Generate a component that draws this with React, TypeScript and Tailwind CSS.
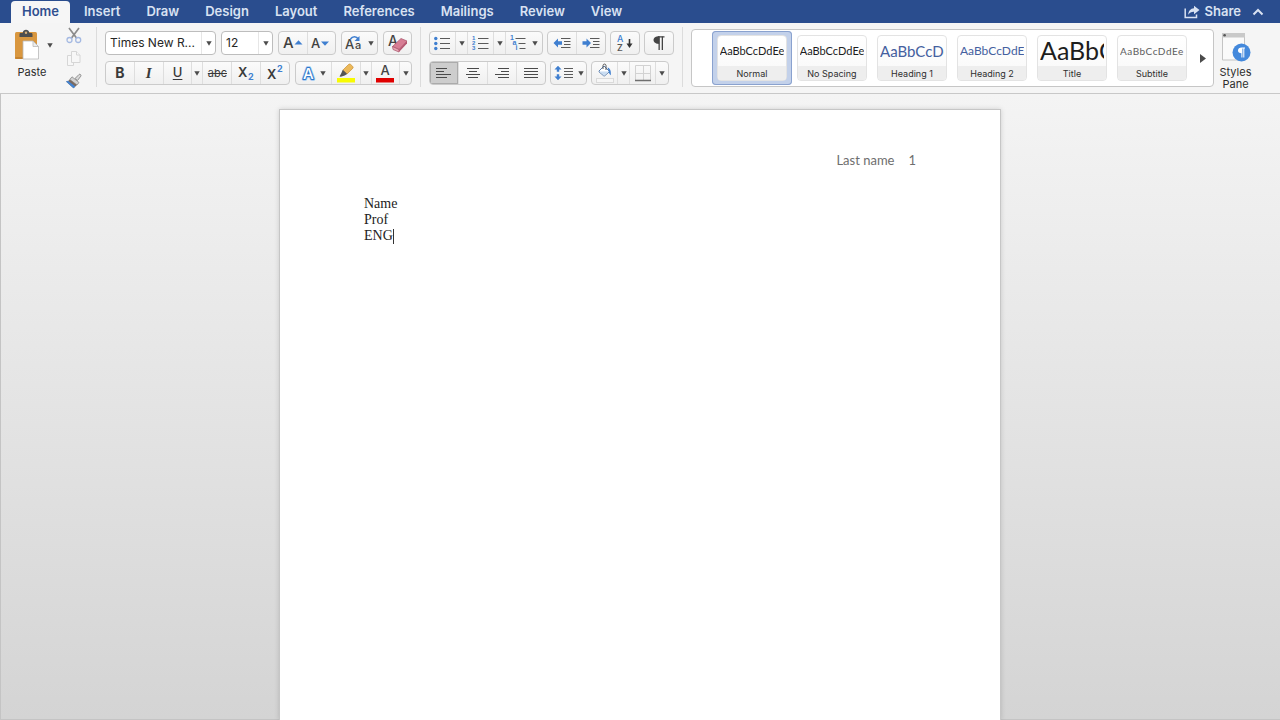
import React from "react";

type Children = { children?: React.ReactNode };

const tabs = ["Home", "Insert", "Draw", "Design", "Layout", "References", "Mailings", "Review", "View"];

const styleCards = [
  { name: "Normal", sample: "AaBbCcDdEe", look: "text-[11px] text-[#1d1d1d] justify-center" },
  { name: "No Spacing", sample: "AaBbCcDdEe", look: "text-[11px] text-[#1d1d1d] justify-center" },
  { name: "Heading 1", sample: "AaBbCcDc", look: "text-[15px] text-[#44609f] justify-start" },
  { name: "Heading 2", sample: "AaBbCcDdEe", look: "text-xs text-[#44609f] justify-start" },
  { name: "Title", sample: "AaBbC", look: "text-[25px] text-[#1d1d1d] justify-start" },
  { name: "Subtitle", sample: "AaBbCcDdEe", look: "text-[10px] tracking-wider text-[#5c5c5c] justify-start" },
];

function Caret() {
  return (
    <svg width="6" height="5" viewBox="0 0 6 5" className="shrink-0">
      <path d="M0.3 0.3h5.4L3 4.8z" fill="#4b4b4b" />
    </svg>
  );
}

function Group({ children, width }: Children & { width: string }) {
  return (
    <div
      className={`flex h-6 shrink-0 divide-x divide-[#dedede] overflow-hidden rounded border border-[#cbcbcb] bg-gradient-to-b from-[#fbfbfb] to-[#f0f0f0] ${width}`}
    >
      {children}
    </div>
  );
}

function Tool({
  label,
  children,
  width = "flex-1",
  active = false,
}: Children & { label: string; width?: string; active?: boolean }) {
  return (
    <button
      type="button"
      aria-label={label}
      title={label}
      className={`flex items-center justify-center gap-1 ${width} ${active ? "bg-[#cdcdcd] shadow-[inset_0_0_0_1px_#ababab]" : ""}`}
    >
      {children}
    </button>
  );
}

function Pick({ label, value, width }: { label: string; value: string; width: string }) {
  return (
    <label className={`relative flex h-6 shrink-0 items-center rounded border border-[#bdbdbd] bg-white ${width}`}>
      <select aria-label={label} className="h-full w-full appearance-none bg-transparent pl-1 pr-4 text-xs text-[#262626] outline-none">
        <option>{value}</option>
      </select>
      <span className="pointer-events-none absolute inset-y-0 right-0 flex w-[14px] items-center justify-center border-l border-[#e6e6e6]">
        <Caret />
      </span>
    </label>
  );
}

function Lines({ rows }: { rows: [number, number][] }) {
  return (
    <svg width="18" height="16" viewBox="0 0 18 16" stroke="#4a4a4a" strokeWidth="1">
      {rows.map(([from, to], i) => (
        <path key={i} d={`M${from} ${3.5 + i * 3}H${to}`} />
      ))}
    </svg>
  );
}

function Separator() {
  return <div className="mx-2 mb-1.5 mt-1 w-px shrink-0 bg-[#dcdcdc]" />;
}

function ClipboardIcon() {
  return (
    <svg width="26" height="32" viewBox="0 0 26 32">
      <rect x="1" y="3" width="22" height="27" rx="1.5" fill="#d9973f" />
      <rect x="1" y="28" width="22" height="2" rx="1" fill="#c5832f" />
      <path d="M5.500 8V5.200c0-.8.6-1.200 1.400-1.200h1.700C9 2 10.300.8 12 .8S15 2 15.400 4h1.700c.8 0 1.400.4 1.400 1.200V8z" fill="#4f4f4f" />
      <circle cx="12" cy="3.800" r="1.200" fill="#d9b27c" />
      <path d="M9 12h10l5.500 5.500V30H9z" fill="#fff" stroke="#b9b9b9" strokeWidth=".8" />
      <path d="M19 12v5.500h5.500z" fill="#ededed" stroke="#b9b9b9" strokeWidth=".8" />
    </svg>
  );
}

function ScissorsIcon() {
  return (
    <svg width="16" height="17" viewBox="0 0 16 17" fill="none">
      <path d="M3 1l7.500 10M13 1L5.500 11" stroke="#8b8b8b" strokeWidth="1.700" />
      <circle cx="3.500" cy="13" r="2.500" stroke="#a4b9e2" strokeWidth="1.300" />
      <circle cx="12.200" cy="13" r="2.500" stroke="#a4b9e2" strokeWidth="1.300" />
    </svg>
  );
}

function CopyIcon() {
  return (
    <svg width="16" height="17" viewBox="0 0 16 17" fill="#f7f7f7" stroke="#d6d6d6">
      <path d="M1.500 5.500h6v10h-6z" />
      <path d="M5.500 1.500h5l3.500 3.500v7.500H5.500z" />
      <path d="M10.500 1.500V5H14" />
    </svg>
  );
}

function BrushIcon() {
  return (
    <svg width="18" height="16" viewBox="0 0 18 16">
      <path d="M10 5.500l4-4c1-.9 2.600.5 1.800 1.700L12.500 7.500z" fill="#d9d9d9" stroke="#888" strokeWidth=".9" />
      <path d="M7 3.800l7 5.700-2 2.500-7.200-5.500z" fill="#d2d2d2" stroke="#888" strokeWidth=".8" />
      <path d="M4.800 6.500L12 12l-3.500 3.200L1 8.500c1.500 0 2.800-.8 3.800-2z" fill="#7b6a60" />
      <path d="M1 8.500l7.500 6.700 1.900-1.700L3 7.800z" fill="#4384d2" />
    </svg>
  );
}

function GrowFontIcon({ up }: { up: boolean }) {
  return (
    <svg width="22" height="18" viewBox="0 0 22 18">
      <text x="1" y="14" fontFamily="Inter, sans-serif" fontSize={up ? 15 : 13} fontWeight="500" fill="#404040">A</text>
      {up ? <path d="M12.500 10.500L16.500 6.200l4 4.300z" fill="#3f7fd0" /> : <path d="M11 7.500h8l-4 4.300z" fill="#3f7fd0" />}
    </svg>
  );
}

function ChangeCaseIcon() {
  return (
    <svg width="19" height="18" viewBox="0 0 19 18">
      <text x="0" y="15" fontFamily="Inter, sans-serif" fontSize="13" fontWeight="500" fill="#444">A</text>
      <text x="10" y="15" fontFamily="Inter, sans-serif" fontSize="11" fontWeight="500" fill="#444">a</text>
      <path d="M5.500 5c2-3 6-3 7.700 0" fill="none" stroke="#3f7fd0" strokeWidth="1.600" />
      <path d="M14.500 2v5h-5z" fill="#3f7fd0" />
    </svg>
  );
}

function ClearFormatIcon() {
  return (
    <svg width="22" height="20" viewBox="0 0 22 20">
      <text x="1" y="13" fontFamily="Inter, sans-serif" fontSize="14" fontWeight="500" fill="#444">A</text>
      <path d="M5.500 13.500l8.500-8 6 2.500-8 8.500z" fill="#d77d94" stroke="#a65067" strokeWidth=".7" />
      <path d="M5.500 13.500l6.500 3v2.500l-6-2.500z" fill="#e8a6b5" stroke="#a65067" strokeWidth=".7" />
      <path d="M12 16.500L20 8v2.500L12 19z" fill="#b65570" />
    </svg>
  );
}

function TextEffectIcon() {
  return (
    <svg width="15" height="16" viewBox="0 0 15 16">
      <text x="2" y="13.500" fontFamily="Inter, sans-serif" fontSize="15" fontWeight="500" fill="#fff" stroke="#9cc6f2" strokeWidth="3.400" strokeLinejoin="round">A</text>
      <text x="2" y="13.500" fontFamily="Inter, sans-serif" fontSize="15" fontWeight="500" fill="#fff" stroke="#2f77c8" strokeWidth="2" strokeLinejoin="round">A</text>
      <text x="2" y="13.500" fontFamily="Inter, sans-serif" fontSize="15" fontWeight="500" fill="#fff">A</text>
    </svg>
  );
}

function HighlightIcon() {
  return (
    <svg width="20" height="20" viewBox="0 0 20 20">
      <rect x="1" y="15" width="18" height="4.500" fill="#f8fb02" />
      <path d="M7 7L12.500 1.500c.6-.6 1.500-.6 2.200 0l2 1.900c.6.6.6 1.400 0 2L11 11z" fill="#ecb95a" stroke="#c98f35" strokeWidth=".7" />
      <path d="M6.700 6.700l4.500 4.300-2.500 1.600-3.800 1.200-1.400-.4L5.400 10z" fill="#555" />
    </svg>
  );
}

function FontColorIcon() {
  return (
    <svg width="20" height="20" viewBox="0 0 20 20">
      <text x="10" y="12" textAnchor="middle" fontFamily="Inter, sans-serif" fontSize="13" fontWeight="500" fill="#444">A</text>
      <rect x="1" y="15" width="18" height="4.500" fill="#e00000" />
    </svg>
  );
}

function ScriptIcon({ sup }: { sup: boolean }) {
  return (
    <svg width="18" height="20" viewBox="0 0 18 20" fontFamily="Inter, sans-serif">
      <text x="1" y={sup ? 16 : 14} fontSize="13" fontWeight="600" fill="#3a3a3a">X</text>
      <text x="11" y={sup ? 9 : 17} fontSize="9" fontWeight="700" fill="#3f7fd0">2</text>
    </svg>
  );
}

function BulletsIcon() {
  return (
    <svg width="18" height="16" viewBox="0 0 18 16">
      <g fill="#3f7fd0">
        <circle cx="1.800" cy="3.500" r="1.700" />
        <circle cx="1.800" cy="8.500" r="1.700" />
        <circle cx="1.800" cy="13.500" r="1.700" />
      </g>
      <path d="M6 3.500h10M6 8.500h10M6 13.500h10" stroke="#5a5a5a" />
    </svg>
  );
}

function NumberingIcon() {
  return (
    <svg width="18" height="18" viewBox="0 0 18 18">
      <g fontFamily="Liberation Sans, sans-serif" fontSize="6" fontWeight="700" fill="#3f7fd0">
        <text x="0" y="6">1</text>
        <text x="0" y="11">2</text>
        <text x="0" y="16">3</text>
      </g>
      <path d="M6 4.500h10.500M6 9.500h10.500M6 14.500h10.500" stroke="#5a5a5a" />
    </svg>
  );
}

function MultilevelIcon() {
  return (
    <svg width="18" height="18" viewBox="0 0 18 18">
      <g fontFamily="Liberation Sans, sans-serif" fontSize="7" fontWeight="700" fill="#3f7fd0">
        <text x="0" y="6">1</text>
        <text x="2.500" y="11">a</text>
        <text x="5.500" y="16">i</text>
      </g>
      <path d="M5.500 4.500h10M8.500 9.500h7M9.500 14.500h6" stroke="#5a5a5a" />
    </svg>
  );
}

function IndentIcon({ increase }: { increase: boolean }) {
  return (
    <svg width="18" height="14" viewBox="0 0 18 14">
      <path
        d={increase ? "M9 7L4.500 2.500V5.200H.5v3.600h4v2.700z" : "M.5 7L5 2.500V5.200h4v3.600H5v2.700z"}
        fill="#3f7fd0"
      />
      <path d="M8 2.500h9.500M11 5.500h6.500M11 8.500h6.500M8 11.500h9.500" stroke="#5a5a5a" />
    </svg>
  );
}

function SortIcon() {
  return (
    <svg width="20" height="20" viewBox="0 0 20 20">
      <text x="2" y="9" fontFamily="Inter, sans-serif" fontSize="9" fontWeight="500" fill="#3f7fd0">A</text>
      <text x="2" y="18" fontFamily="Inter, sans-serif" fontSize="9" fontWeight="500" fill="#555">Z</text>
      <path d="M14.500 6v6" stroke="#333" strokeWidth="1.600" />
      <path d="M11.500 10.500h6l-3 4.500z" fill="#333" />
    </svg>
  );
}

function PilcrowIcon() {
  return (
    <svg width="14" height="16" viewBox="0 0 14 16" fill="#444">
      <path d="M6 1.200h6.500v1.200H6z" />
      <path d="M7.200 1.200v7.800C3.800 9 1.500 7.500 1.500 5.100s2.300-3.900 5.700-3.900z" />
      <path d="M6.500 1.500h1.300V15H6.500zM9.700 1.500H11V15H9.700z" />
    </svg>
  );
}

function LineSpacingIcon() {
  return (
    <svg width="20" height="16" viewBox="0 0 20 16">
      <path d="M4 .8l3.500 3.700H5.200v2.300H2.800V4.500H.5zM4 15.200L.5 11.500h2.300V9.200h2.400v2.300h2.300z" fill="#3f7fd0" />
      <path d="M10 3.500h9M10 6.500h9M10 9.500h9M10 12.500h9" stroke="#5a5a5a" />
    </svg>
  );
}

function ShadingIcon() {
  return (
    <svg width="20" height="20" viewBox="0 0 20 20" fill="none">
      <path d="M4 8l5-5 5.500 5.500-4.700 4.200c-.4.400-.9.400-1.300 0L4 8.800z" fill="#fff" stroke="#5b7fae" />
      <path d="M4.500 8.500L9 12.500l4.500-4z" fill="#c8dcf2" />
      <path d="M8 6V2.500C8 .6 11 .6 11 2.500V7" stroke="#555" />
      <path d="M12.500 4.500c2.300.5 3.800 3 3.300 7.700-1.300-.8-2-2.500-2.200-4.500z" fill="#3f7fd0" />
      <rect x="1.500" y="15.500" width="17" height="4" fill="#f6f6f6" stroke="#dadada" />
    </svg>
  );
}

function BordersIcon() {
  return (
    <svg width="18" height="18" viewBox="0 0 18 18" fill="none">
      <path d="M1.500 1.500h15v15h-15zM9.500 1.500v15M1.500 9.500h15" stroke="#d2d2d2" />
      <path d="M1 16.500h16" stroke="#6e6e6e" strokeWidth="1.300" />
    </svg>
  );
}

function StylesPaneIcon() {
  return (
    <svg width="30" height="30" viewBox="0 0 30 30">
      <path d="M1.500 1.500h22V28h-22z" fill="#fafafa" stroke="#c4c4c4" />
      <path d="M1 1h23v4.500H1z" fill="#c9c9c9" />
      <circle cx="3.600" cy="3.200" r="1.300" fill="#555" />
      <circle cx="20.500" cy="20.500" r="9" fill="#4489dc" />
      <path d="M20.700 15.500h3.300v1h-.7v9h-1v-9h-.9v9h-1v-4.300c-2 0-3.400-1.100-3.400-2.800s1.400-2.900 3.700-2.900z" fill="#fff" />
    </svg>
  );
}

function TitleTabs() {
  return (
    <header className="flex h-[23px] items-stretch bg-[#2a4d8e] text-white">
      <nav role="tablist" aria-label="Ribbon tabs" className="flex items-stretch pl-[11px] pt-px">
        {tabs.map((tab, i) => (
          <button
            key={tab}
            type="button"
            role="tab"
            aria-selected={i === 0}
            className={
              i === 0
                ? "mr-px rounded-t-sm bg-[#f6f6f6] px-[11px] text-[13px] font-semibold text-[#2f4f8f]"
                : "px-[13px] text-[13px] font-semibold text-[#d9e2f2]"
            }
          >
            {tab}
          </button>
        ))}
      </nav>
      <div className="ml-auto flex items-center gap-[11px] pr-4 text-[#d9e2f2]">
        <button type="button" className="flex items-center gap-[5px] text-[13px] font-semibold">
          <svg width="16" height="14" viewBox="0 0 16 14" fill="none">
            <path d="M1.200 3.500v9h11.300V9.500" stroke="currentColor" strokeWidth="1.500" />
            <path d="M10 .8L15.500 5 10 9.200V6.800C7.500 6.700 5.500 7.700 4.200 9.800 4.400 6 6.500 3.600 10 3.300z" fill="currentColor" />
          </svg>
          Share
        </button>
        <button type="button" aria-label="Collapse ribbon">
          <svg width="12" height="8" viewBox="0 0 12 8" fill="none">
            <path d="M1.500 6.500L6 2l4.500 4.500" stroke="currentColor" strokeWidth="2" />
          </svg>
        </button>
      </div>
    </header>
  );
}

function ClipboardSection() {
  return (
    <div className="flex shrink-0 pl-[14px]">
      <button type="button" className="flex w-9 flex-col items-start pt-[6px] text-[11px] leading-4 text-[#2d2d2d]">
        <ClipboardIcon />
        <span className="mt-[3px] w-full text-center">Paste</span>
      </button>
      <button type="button" aria-label="Paste options" className="-ml-1 flex h-11 w-2 items-center justify-center">
        <Caret />
      </button>
      <div className="flex w-[34px] flex-col items-center gap-[6px] pl-[6px] pt-1">
        <button type="button" aria-label="Cut"><ScissorsIcon /></button>
        <button type="button" aria-label="Copy"><CopyIcon /></button>
        <button type="button" aria-label="Format painter"><BrushIcon /></button>
      </div>
    </div>
  );
}

function FontSection() {
  return (
    <div className="flex w-[307px] shrink-0 flex-col gap-[6px] pt-2 text-[#3a3a3a]">
      <div className="flex gap-[5px]">
        <Pick label="Font" value="Times New R..." width="w-[111px]" />
        <Pick label="Font size" value="12" width="w-[52px]" />
        <Group width="w-[58px]">
          <Tool label="Increase font size"><GrowFontIcon up /></Tool>
          <Tool label="Decrease font size"><GrowFontIcon up={false} /></Tool>
        </Group>
        <Group width="w-[37px]">
          <Tool label="Change case"><ChangeCaseIcon /><Caret /></Tool>
        </Group>
        <Group width="w-[29px]">
          <Tool label="Clear formatting"><ClearFormatIcon /></Tool>
        </Group>
      </div>
      <div className="flex gap-[5px]">
        <Group width="w-[185px]">
          <Tool label="Bold"><span className="text-sm font-bold">B</span></Tool>
          <Tool label="Italic"><span className="font-['Liberation_Serif',serif] text-[15px] font-bold italic">I</span></Tool>
          <Tool label="Underline"><span className="text-[13px] font-medium underline underline-offset-2">U</span></Tool>
          <Tool label="Underline options" width="w-[11px]"><Caret /></Tool>
          <Tool label="Strikethrough"><span className="text-[11px] line-through">abc</span></Tool>
          <Tool label="Subscript"><ScriptIcon sup={false} /></Tool>
          <Tool label="Superscript"><ScriptIcon sup /></Tool>
        </Group>
        <Group width="w-[117px]">
          <Tool label="Text effects" width="w-9"><TextEffectIcon /><Caret /></Tool>
          <Tool label="Highlight"><HighlightIcon /></Tool>
          <Tool label="Highlight options" width="w-[11px]"><Caret /></Tool>
          <Tool label="Font color"><FontColorIcon /></Tool>
          <Tool label="Font color options" width="w-[11px]"><Caret /></Tool>
        </Group>
      </div>
    </div>
  );
}

function ParagraphSection() {
  return (
    <div className="flex w-[245px] shrink-0 flex-col gap-[6px] pt-2">
      <div className="flex gap-1">
        <Group width="w-[114px]">
          <Tool label="Bullets"><BulletsIcon /></Tool>
          <Tool label="Bullet options" width="w-3"><Caret /></Tool>
          <Tool label="Numbering"><NumberingIcon /></Tool>
          <Tool label="Numbering options" width="w-3"><Caret /></Tool>
          <Tool label="Multilevel list" width="w-9"><MultilevelIcon /><Caret /></Tool>
        </Group>
        <Group width="w-[59px]">
          <Tool label="Decrease indent"><IndentIcon increase={false} /></Tool>
          <Tool label="Increase indent"><IndentIcon increase /></Tool>
        </Group>
        <Group width="w-[30px]">
          <Tool label="Sort"><SortIcon /></Tool>
        </Group>
        <Group width="w-[30px]">
          <Tool label="Show formatting marks"><PilcrowIcon /></Tool>
        </Group>
      </div>
      <div className="flex gap-1">
        <Group width="w-[117px]">
          <Tool label="Align left" active><Lines rows={[[1, 12], [1, 9], [1, 16], [1, 12]]} /></Tool>
          <Tool label="Center"><Lines rows={[[3, 15], [5, 13], [2, 16], [4, 14]]} /></Tool>
          <Tool label="Align right"><Lines rows={[[5, 16], [8, 16], [2, 16], [5, 16]]} /></Tool>
          <Tool label="Justify"><Lines rows={[[2, 16], [2, 16], [2, 16], [2, 16]]} /></Tool>
        </Group>
        <Group width="w-[37px]">
          <Tool label="Line spacing"><LineSpacingIcon /><Caret /></Tool>
        </Group>
        <Group width="w-[78px]">
          <Tool label="Shading"><ShadingIcon /></Tool>
          <Tool label="Shading options" width="w-3"><Caret /></Tool>
          <Tool label="Borders"><BordersIcon /></Tool>
          <Tool label="Border options" width="w-3"><Caret /></Tool>
        </Group>
      </div>
    </div>
  );
}

function StyleGallery() {
  return (
    <div className="mb-[6px] mt-[6px] flex min-w-0 flex-1 items-center rounded border border-[#c6c6c6] bg-white pl-5">
      <div className="flex min-w-0 flex-1 overflow-hidden">
        {styleCards.map((card, i) => (
          <button
            key={card.name}
            type="button"
            aria-pressed={i === 0}
            className={`flex h-[54px] w-20 shrink-0 rounded px-[5px] py-1 ${i === 0 ? "bg-[#c3d1ea] shadow-[inset_0_0_0_1px_#8aa2cf]" : ""}`}
          >
            <span className="flex h-full w-full flex-col overflow-hidden rounded-sm border border-[#e3e3e3] bg-gradient-to-b from-white to-[#f8f8f8]">
              <span className={`mx-[2px] flex h-[30px] items-center overflow-hidden whitespace-nowrap font-['Lato',sans-serif] ${card.look}`}>
                {card.sample}
              </span>
              <span className="flex flex-1 items-center justify-center bg-[#eeeeee] text-[9px] leading-none text-[#2e2e2e]">
                {card.name}
              </span>
            </span>
          </button>
        ))}
      </div>
      <button type="button" aria-label="More styles" className="flex w-5 shrink-0 items-center justify-center">
        <svg width="6" height="9" viewBox="0 0 6 9"><path d="M0 0l6 4.500L0 9z" fill="#4b4b4b" /></svg>
      </button>
    </div>
  );
}

function Ribbon() {
  return (
    <div className="flex h-[71px] border-b border-[#c8c8c8] bg-[#f5f5f5]">
      <ClipboardSection />
      <Separator />
      <FontSection />
      <Separator />
      <ParagraphSection />
      <Separator />
      <StyleGallery />
      <button type="button" className="ml-px mr-6 flex w-[41px] shrink-0 flex-col items-center pt-[9px] text-[11px] leading-3 text-[#2d2d2d]">
        <StylesPaneIcon />
        <span className="mt-1">Styles Pane</span>
      </button>
    </div>
  );
}

export default function App() {
  return (
    <div className="flex min-h-screen flex-col font-['Inter','Liberation_Sans',sans-serif]">
      <TitleTabs />
      <Ribbon />
      <main className="flex flex-1 justify-center bg-gradient-to-b from-[#f4f4f4] to-[#d4d4d4] pt-[15px] shadow-[inset_1px_-1px_0_#c4c4c4]">
        <article className="w-full max-w-[722px] border border-b-0 border-[#c6c6c6] bg-white px-[84px] pt-[41px] shadow-[0_0_5px_rgba(0,0,0,0.15)]">
          <header className="flex justify-end gap-[14px] font-['Lato',sans-serif] text-[13px] leading-[18px] text-[#6e6e6e]">
            <span>Last name</span>
            <span>1</span>
          </header>
          <div className="pt-[27px] font-['Liberation_Serif',serif] text-sm leading-4 text-[#222222]">
            <p>Name</p>
            <p>Prof</p>
            <p className="flex items-center">
              ENG
              <span className="h-[15px] w-px bg-[#333333]" />
            </p>
          </div>
        </article>
      </main>
    </div>
  );
}
